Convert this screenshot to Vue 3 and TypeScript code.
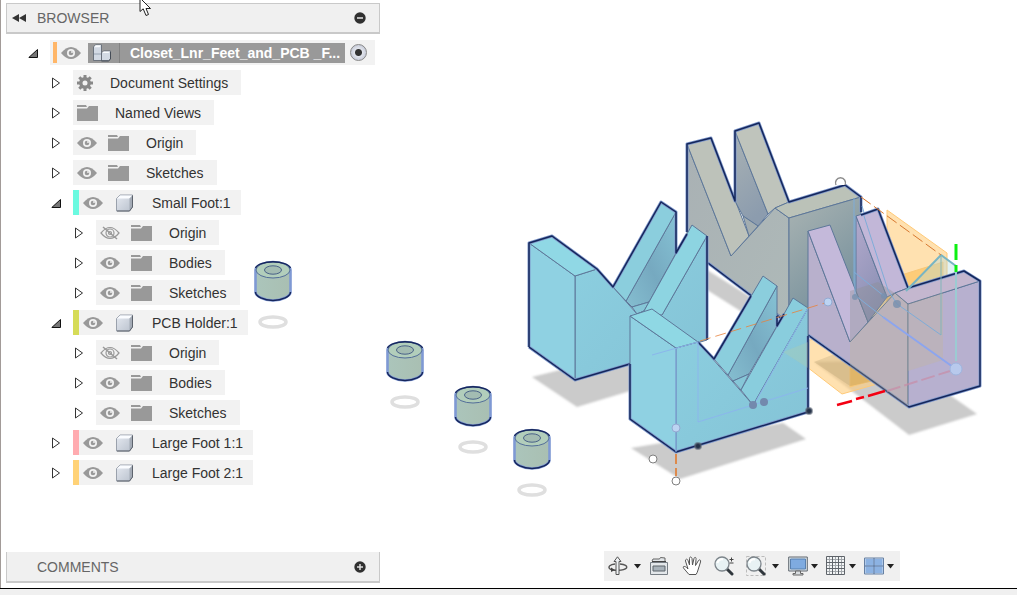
<script setup lang="ts">
import { ref } from 'vue'

type Icon = 'gear' | 'folder' | 'cube'

interface TreeNode {
  id: number
  label: string
  icon: Icon
  visible?: boolean
  tone?: string
  open?: boolean
  children?: TreeNode[]
}

const nodes = ref<TreeNode[]>([
  { id: 1, label: 'Document Settings', icon: 'gear' },
  { id: 2, label: 'Named Views', icon: 'folder' },
  { id: 3, label: 'Origin', icon: 'folder', visible: true },
  { id: 4, label: 'Sketches', icon: 'folder', visible: true },
  {
    id: 5, label: 'Small Foot:1', icon: 'cube', visible: true, tone: 'aqua', open: true,
    children: [
      { id: 51, label: 'Origin', icon: 'folder', visible: false },
      { id: 52, label: 'Bodies', icon: 'folder', visible: true },
      { id: 53, label: 'Sketches', icon: 'folder', visible: true },
    ],
  },
  {
    id: 6, label: 'PCB Holder:1', icon: 'cube', visible: true, tone: 'lime', open: true,
    children: [
      { id: 61, label: 'Origin', icon: 'folder', visible: false },
      { id: 62, label: 'Bodies', icon: 'folder', visible: true },
      { id: 63, label: 'Sketches', icon: 'folder', visible: true },
    ],
  },
  { id: 7, label: 'Large Foot 1:1', icon: 'cube', visible: true, tone: 'rose' },
  { id: 8, label: 'Large Foot 2:1', icon: 'cube', visible: true, tone: 'amber' },
])

interface Row { node: TreeNode; depth: number }

function flatten(list: TreeNode[], depth = 1): Row[] {
  return list.flatMap((node) => [
    { node, depth },
    ...(node.open && node.children ? flatten(node.children, depth + 1) : []),
  ])
}

const feet = [
  { x: 273, y: 270 },
  { x: 405, y: 350 },
  { x: 473, y: 395 },
  { x: 532, y: 438 },
]

const tools = [
  { name: 'Orbit', icon: 'orbit', menu: 'wide' },
  { name: 'Look At', icon: 'look', menu: '' },
  { name: 'Pan', icon: 'pan', menu: '' },
  { name: 'Zoom', icon: 'zoom', menu: '' },
  { name: 'Zoom Window', icon: 'window', menu: 'wide' },
  { name: 'Display Settings', icon: 'display', menu: 'tight' },
  { name: 'Grid and Snaps', icon: 'grid', menu: 'tight' },
  { name: 'Viewports', icon: 'views', menu: 'tight' },
]
</script>

<template>
  <div class="app">
    <main class="workspace">
      <svg class="scene" viewBox="0 0 1017 588" preserveAspectRatio="xMaxYMin meet" role="img" aria-label="Model view">
        <defs>
          <linearGradient id="blueFace" x1="0" y1="0" x2="1" y2="1">
            <stop offset="0" stop-color="#8ccfe0" />
            <stop offset="1" stop-color="#84c3d6" />
          </linearGradient>
          <linearGradient id="blueDark" x1="0" y1="1" x2="1" y2="0">
            <stop offset="0" stop-color="#85bed0" />
            <stop offset="0.45" stop-color="#76a9c0" />
            <stop offset="1" stop-color="#86c3d5" />
          </linearGradient>
          <linearGradient id="grayFace" x1="0" y1="0" x2="1" y2="1">
            <stop offset="0" stop-color="#a9b1b4" />
            <stop offset="1" stop-color="#aeb9b8" />
          </linearGradient>
          <linearGradient id="grayDark" x1="0" y1="0" x2="0.3" y2="1">
            <stop offset="0" stop-color="#a9b2b4" />
            <stop offset="1" stop-color="#8c9cae" />
          </linearGradient>
          <linearGradient id="graySide" x1="0" y1="0" x2="0.5" y2="1">
            <stop offset="0" stop-color="#aab4b3" />
            <stop offset="1" stop-color="#76909c" />
          </linearGradient>
          <linearGradient id="violetDark" x1="0" y1="0" x2="0.4" y2="1">
            <stop offset="0" stop-color="#b3a9cc" />
            <stop offset="1" stop-color="#8a90b4" />
          </linearGradient>
          <linearGradient id="footSide" x1="0" x2="1">
            <stop offset="0" stop-color="#abc5bb" />
            <stop offset="1" stop-color="#a9bfb2" />
          </linearGradient>
          <filter id="soft" x="-10%" y="-10%" width="120%" height="120%">
            <feGaussianBlur stdDeviation="1.2" />
          </filter>
        </defs>

        <!-- ground shadows -->
        <g fill="#cbcbcb" filter="url(#soft)">
          <path d="M532 377L577 407L640 388V350Z" />
          <path d="M631 448L680 479L806 439L783 423Z" />
          <path d="M704 268L752 298L742 312L704 288Z" />
          <path d="M814 362L909 435L977 414L900 360Z" />
        </g>

        <!-- origin planes -->
        <path d="M785 350L842 394L947 364V253L887 210V330L809 340Z" fill="#ffcf80" fill-opacity=".62" stroke="#ffca78" />
        <path d="M850 291L943 262V360L850 387Z" fill="#fbb840" fill-opacity=".5" stroke="#f9c878" />
        <path d="M814 362L850 386L885 379L850 348Z" fill="#8a7a50" opacity=".18" />
        <path d="M941 255L906 291H956V266Z" fill="#a9d6df" fill-opacity=".35" />

        <!-- grey body -->
        <g class="edges">
          <path d="M687 144L731 256L775 208L789 218V322L708 263L687 248Z" fill="url(#grayFace)" />
          <path d="M687 144L711 138L749 236L731 256Z" fill="#bdc2ba" />
          <path d="M735 131V201L743 216L758 226L768 214Z" fill="url(#grayDark)" />
          <path d="M743 216L758 226L749 236Z" fill="#a3adb0" />
          <path d="M735 131L759 123L789 202L775 208L768 214Z" fill="#bfc4bc" />
          <path d="M775 208L789 202L845 185L861 197L789 218Z" fill="#bbc2b8" />
          <path d="M789 218L861 197V320H789Z" fill="url(#graySide)" />
          <path class="outline" d="M687 232V144L711 138L735 201V131L759 123L789 202L845 185L861 197V212M708 263L782 319" />
          <path class="rim" d="M687 232V144L711 138L735 201V131L759 123L789 202L845 185L861 197V212M708 263L782 319" />
        </g>
        <g class="guide" stroke="#7eacd8">
          <path d="M854 198V296M862 206L888 290M854 272L884 296" />
        </g>

        <!-- violet body -->
        <g class="edges">
          <path d="M808 231L850 342L895 293L908 304V407L808 335Z" fill="#b8b0cc" />
          <path d="M908 304L980 281V386L908 407Z" fill="#b7b0cf" />
          <path d="M808 231L830 225L868 322L850 342Z" fill="#c4b9da" />
          <path d="M856 216V291L868 322L887 297Z" fill="url(#violetDark)" />
          <path d="M856 216L878 209L908 288L895 293L887 297Z" fill="#c2b7d8" />
          <path d="M895 293L908 288L964 271L980 281L908 304Z" fill="#c4b7cf" />
          <path class="outline" d="M861 215L878 209L908 288L964 271L980 281V386L909 407L808 335" />
          <path class="rim" d="M861 215L878 209L908 288L964 271L980 281V386L909 407L808 335" />
        </g>
        <path d="M850 342L895 293L908 304L943 293V360L908 371V407L850 366Z" fill="#c4b68c" opacity=".28" />
        <path d="M850 291L878 282L895 293L867 322L850 342Z" fill="#8d8f8e" opacity=".35" />
        <g class="guide" stroke="#7eacd8">
          <path d="M855 216V296M864 216L888 290L897 304L941 335M856 296L883 317M854 272L884 296" />
          <path d="M906 291L941 255L956 266" stroke="#78b5c3" stroke-width="2" />
          <path d="M941 255V335" stroke="#82b5b8" />
          <path d="M956 271V361" stroke="#9ccbd2" stroke-width="2" />
          <path d="M883 317L953 367" stroke="#8ca5ef" stroke-width="2" />
        </g>
        <path d="M956 244V260M956 265V272" stroke="#0df012" stroke-width="3" />
        <path d="M837 405L852 401M856 399L864 397M868 396L885 391" stroke="#f40012" stroke-width="2.500" />
        <path d="M887 391L950 371" stroke="#c98aa5" stroke-width="2" stroke-dasharray="14 4" opacity=".65" />
        <path d="M861 197L941 255" stroke="#d87930" stroke-width="1" stroke-dasharray="12 4" />
        <circle cx="956" cy="369" r="6" fill="#b8c9ec" stroke="#9eb5df" />
        <g fill="#7890ae" opacity=".8">
          <circle cx="855" cy="297" r="3" /><circle cx="884" cy="296" r="3" /><circle cx="897" cy="304" r="4" />
        </g>

        <!-- rear blue body -->
        <g class="edges">
          <path d="M575 276L597 269L637 314L662 315L707 236V340L575 380Z" fill="url(#blueFace)" />
          <path d="M529 243L575 276V380L529 347Z" fill="#8fd1e2" />
          <path d="M529 243L552 236L597 269L575 276Z" fill="#90d8e5" />
          <path d="M676 212V253L649 302L632 307L626 301Z" fill="url(#blueDark)" />
          <path d="M613 287L661 202L676 212L626 301Z" fill="#8bcedd" />
          <path d="M632 307L649 302L644 311L637 314Z" fill="#86c6d7" />
          <path d="M692 225L707 236L662 315L637 314L644 311Z" fill="#8dd4e1" />
          <path class="outline" d="M529 347V243L552 236L597 269L613 287L661 202L676 212V253L687 234M707 236V340M640 361L575 380L529 347" />
          <path class="rim" d="M529 347V243L552 236L597 269L613 287L661 202L676 212V253L687 234M707 236V340M640 361L575 380L529 347" />
        </g>

        <!-- front blue body -->
        <g class="edges">
          <path d="M676 348L698 342L753 405L808 308V412L676 452Z" fill="url(#blueFace)" />
          <path d="M630 316L676 348V452L630 419Z" fill="#8fd1e2" />
          <path d="M630 316L652 309L698 342L676 348Z" fill="#8fd8e4" />
          <path d="M777 286V326L749 374L733 381L728 375Z" fill="url(#blueDark)" />
          <path d="M714 359L763 276L777 286L728 375Z" fill="#8bcedd" />
          <path d="M733 381L749 374L741 390Z" fill="#86c6d7" />
          <path d="M793 298L808 308L753 405L741 390Z" fill="#89cddd" />
          <path class="outline" d="M698 342L714 359L751 296M777 316V326L784 314M808 336V412L676 452L630 419V364" />
          <path class="rim" d="M698 342L714 359L751 296M777 316V326L784 314M808 336V412L676 452L630 419V364" />
        </g>
        <path d="M808 342L783 352L808 368Z" fill="#bfcf9c" opacity=".25" />
        <g class="guide" stroke="#8bb6ec">
          <path d="M676 348V452M652 355L698 342V422L808 388M756 401L808 308" />
        </g>
        <path d="M700 341L828 302" stroke="#e8823c" stroke-width="1" stroke-dasharray="11 5" opacity=".8" />
        <path d="M676 454V476" stroke="#dd8a4c" stroke-width="2" stroke-dasharray="10 4" />

        <g fill="#7389ad">
          <circle cx="753" cy="405" r="4" /><circle cx="764" cy="402" r="4" />
        </g>
        <g fill="#233047" stroke="#5b6575" stroke-opacity=".6" stroke-width="2">
          <circle cx="698" cy="446" r="3" /><circle cx="809" cy="411" r="3" />
        </g>
        <g fill="#bcd4f2" stroke="#94aad2">
          <circle cx="676" cy="428" r="4" /><circle cx="828" cy="302" r="4" />
        </g>
        <g fill="#fff" stroke="#7f7f7f">
          <circle cx="653" cy="459" r="4" /><circle cx="676" cy="481" r="4" />
        </g>
        <path d="M836 185A5 5 0 1 1 845 185" fill="#fff" stroke="#8c8c8c" stroke-width="1.5" />

        <!-- small feet -->
        <g v-for="foot in feet" :key="foot.x" :transform="`translate(${foot.x} ${foot.y})`">
          <ellipse cy="52" rx="13" ry="5" fill="none" stroke="#dfdfdf" stroke-width="3.500" />
          <path d="M-17.5 0V22C-17.5 26 -9 30.5 0 30.5S17.5 26 17.5 22V0C17.5 -4 9 -8 0 -8S-17.5 -4 -17.5 0Z" fill="url(#footSide)" stroke="#7f99d4" stroke-width="2.6" />
          <ellipse rx="17" ry="8" fill="#b2cebb" stroke="#536e99" stroke-width="1" />
          <ellipse rx="8.5" ry="4.2" fill="#a3bcb2" stroke="#4a6288" />
          <path d="M-17.5 -2C-16 -5.500 -9 -8.200 0 -8.200S16 -5.500 17.500 -2M-17.500 22C-17.500 26.500 -9 30.500 0 30.500S17.500 26.500 17.500 22" fill="none" stroke="#16265c" stroke-width="1.5" />
        </g>
      </svg>

      <header class="panel">
        <button class="icon-button collapse" aria-label="Collapse browser">
          <svg width="14" height="8" viewBox="0 0 14 8"><path d="M7 0V8L0 4ZM14 0V8L7 4Z" fill="#333" /></svg>
        </button>
        <h2>BROWSER</h2>
        <button class="icon-button" aria-label="Minimize browser">
          <svg width="12" height="12" viewBox="0 0 12 12"><circle cx="6" cy="6" r="5.700" fill="#303030" /><path d="M3 6H9" stroke="#ddd" stroke-width="1.600" /></svg>
        </button>
      </header>

      <nav class="tree" aria-label="Browser">
        <div class="row root">
          <button class="toggle" aria-label="Collapse document">
            <svg width="10" height="10" viewBox="0 0 10 10"><path d="M9.500 1.500V9.500H.8Z" fill="#777" stroke="#111" /></svg>
          </button>
          <div class="item root-item">
            <span class="strip orange"></span>
            <button class="icon-button" aria-label="Hide document">
              <svg width="20" height="14" viewBox="0 0 20 14"><path d="M0 7Q10-5 20 7Q10 19 0 7Z" fill="#999" /><circle cx="10" cy="7" r="4" fill="#f2f2f2" /><circle cx="10" cy="7" r="2.300" fill="#999" /><circle cx="11" cy="6" r="1" fill="#eee" /></svg>
            </button>
            <div class="title">
              <span class="title-icon">
                <svg width="20" height="18" viewBox="0 0 20 18">
                  <path d="M1.500 3L3.500 .8H9.500V16.500H1.500Z" fill="#d3dae4" stroke="#59616c" stroke-width=".8" />
                  <path d="M2 3.200L3.700 1.300H9L7.500 3.200Z" fill="#fafcfe" />
                  <path d="M9.500 9L11.500 7H18.500V15L16.500 17H9.500Z" fill="#d3dae4" stroke="#59616c" stroke-width=".8" />
                  <path d="M10 9L11.700 7.400H18L16.500 9Z" fill="#fafcfe" />
                  <path d="M2 10H9" stroke="#8c97a6" stroke-width=".8" />
                  <path d="M9.500 16.800H16.700L18.500 15V8" stroke="#454c56" fill="none" />
                </svg>
              </span>
              <span class="title-text">Closet_Lnr_Feet_and_PCB _F...</span>
            </div>
            <input class="activate" type="radio" name="active" checked aria-label="Activate document" />
          </div>
        </div>

        <ul>
          <li v-for="{ node, depth } in flatten(nodes)" :key="node.id" class="row" :class="{ nested: depth === 2 }">
            <button class="toggle" :aria-label="(node.open ? 'Collapse ' : 'Expand ') + node.label" @click="node.open = !node.open">
              <svg v-if="node.open" width="10" height="10" viewBox="0 0 10 10"><path d="M9.500 1.500V9.500H.8Z" fill="#777" stroke="#111" /></svg>
              <svg v-else width="10" height="12" viewBox="0 0 10 12"><path d="M1.500 1V11L8.500 6Z" fill="#fff" stroke="#333" /></svg>
            </button>
            <div class="item" :class="node.icon">
              <span v-if="node.tone" class="strip" :class="node.tone"></span>
              <button
                v-if="node.visible !== undefined"
                class="icon-button eye"
                :aria-label="(node.visible ? 'Hide ' : 'Show ') + node.label"
                @click="node.visible = !node.visible"
              >
                <svg v-if="node.visible" width="20" height="14" viewBox="0 0 20 14"><path d="M0 7Q10-5 20 7Q10 19 0 7Z" fill="#999" /><circle cx="10" cy="7" r="4" fill="#f2f2f2" /><circle cx="10" cy="7" r="2.300" fill="#999" /><circle cx="11" cy="6" r="1" fill="#eee" /></svg>
                <svg v-else width="20" height="14" viewBox="0 0 20 14" fill="none" stroke="#999" stroke-width="1.200"><path d="M1 7Q10-4 19 7Q10 18 1 7Z" /><circle cx="10" cy="7" r="4" /><circle cx="10" cy="7" r="1.500" /><path d="M3 1L17 13" stroke-width="1.500" /></svg>
              </button>
              <svg v-if="node.icon === 'gear'" width="16" height="16" viewBox="-8 -8 16 16" fill="none" stroke="#888">
                <circle r="4.200" stroke-width="3.400" />
                <path d="M0-8V-5M0 5V8M-8 0H-5M5 0H8M-5.700-5.700L-3.600-3.600M3.600 3.600L5.700 5.700M-5.700 5.700L-3.600 3.600M3.600-3.600L5.700-5.700" stroke-width="3" />
              </svg>
              <svg v-else-if="node.icon === 'folder'" width="21" height="16" viewBox="0 0 21 16" fill="#999"><path d="M0 0H9L10 2H0Z" /><path d="M0 3.500H10L12 1H21V16H0Z" /></svg>
              <svg v-else width="21" height="18" viewBox="0 0 21 18">
                <defs><linearGradient :id="'cube' + node.id" x2="1" y2="1"><stop stop-color="#e6eaf1" /><stop offset="1" stop-color="#b9c1cd" /></linearGradient></defs>
                <path d="M2.500 4.500L6 1H18.500V13L15.500 17H2.500Z" :fill="`url(#cube${node.id})`" stroke="#9aa1ac" />
                <path d="M3 4.500L6 1.500H18L15.500 4.500Z" fill="#fafcff" />
                <path d="M15.500 4.500L18.500 1.500V13L15.500 17Z" fill="#a4abb6" />
                <path d="M3 17H15.500L18.500 13V1.500" fill="none" stroke="#5d636d" />
              </svg>
              <span class="label">{{ node.label }}</span>
            </div>
          </li>
        </ul>
      </nav>

      <footer class="dock">
        <section class="panel comments">
          <h2>COMMENTS</h2>
          <button class="icon-button" aria-label="Expand comments">
            <svg width="12" height="12" viewBox="0 0 12 12"><circle cx="6" cy="6" r="5.700" fill="#303030" /><path d="M3 6H9M6 3V9" stroke="#ddd" stroke-width="1.500" /></svg>
          </button>
        </section>

        <div class="toolbar" role="toolbar" aria-label="Navigation">
          <div v-for="tool in tools" :key="tool.icon" class="tool" :class="tool.menu">
            <button class="icon-button" :aria-label="tool.name">
              <svg width="20" height="20" viewBox="0 0 20 20" fill="none">
                <g v-if="tool.icon === 'orbit'">
                  <path d="M7 8C2 8.500 0 10.500 1.500 12.500C4 15 16 15 18.500 12C19.500 10 17 8.500 12 8" stroke="#555" stroke-width="1.400" />
                  <path d="M9.500 .8L13 5.500H11V18.500H8V5.500H6Z" fill="#eef1f3" stroke="#555" />
                  <path d="M3 11.500L7 14L3 16Z" fill="#444" />
                </g>
                <g v-else-if="tool.icon === 'look'">
                  <path d="M.5 6.500H17.500V18.500H.5Z" fill="#e3e7ea" stroke="#777e85" />
                  <path d="M3 10H15V15H3Z" fill="#a8b2ba" stroke="#5d646b" />
                  <path d="M2 5L3 3H9.500L10.500 1.500L15 2V5" fill="#e1e5e8" stroke="#666" /><path d="M2 5.500H16" stroke="#444" />
                </g>
                <g v-else-if="tool.icon === 'pan'">
                  <path d="M7 18.500C5 16 3 14 1.500 12C.5 10 3 10 4.500 11.500L6 13L3.500 5C3 3 5.500 2.500 6 4.500L7.500 9V2.500C7.500 .5 9.500 .5 10 2.500L10.500 9L12 2.500C12.500 .8 14.500 1 14 3.500L13.500 9.500L16.500 4.500C17.500 3.200 19.200 4 18.500 6L16 14C15.500 16 15 17 14 18.500Z" fill="#fff" stroke="#555" />
                </g>
                <g v-else-if="tool.icon === 'zoom'">
                  <path d="M13 13L18 18" stroke="#30373d" stroke-width="3" stroke-linecap="round" />
                  <circle cx="8" cy="8" r="7" fill="#e8f2f4" stroke="#7d858b" stroke-width="1.300" />
                  <path d="M3.500 7C4 4 6.500 3 9 3.500" stroke="#fff" stroke-width="2" />
                  <path d="M15.500 3.500H19.500M17.500 1.500V5.500M15.500 7H19.500" stroke="#444" />
                </g>
                <g v-else-if="tool.icon === 'window'">
                  <path d="M.5 .5H19.500V19.500H.5Z" stroke="#bbb" stroke-dasharray="3 2" />
                  <path d="M13 13L18 18" stroke="#30373d" stroke-width="3" stroke-linecap="round" />
                  <circle cx="8" cy="8" r="7" fill="#e8f2f4" stroke="#7d858b" stroke-width="1.300" />
                  <path d="M3.500 7C4 4 6.500 3 9 3.500" stroke="#fff" stroke-width="2" />
                </g>
                <g v-else-if="tool.icon === 'display'">
                  <path d="M.7 1H19.300V15H.7Z" fill="#dce4e9" stroke="#626970" />
                  <path d="M2.500 3H17.500V13H2.500Z" fill="#7fabe0" stroke="#5980af" />
                  <path d="M7.500 15H12.500V17.500H15V19H5V17.500H7.500Z" fill="#d9dde0" stroke="#666" />
                </g>
                <g v-else-if="tool.icon === 'grid'">
                  <path d="M.5 .5H18.500V18.500H.5Z" fill="#f3f5f6" />
                  <path d="M3.500 1V18M9.500 1V18M15.500 1V18M1 3.500H18M1 9.500H18M1 15.500H18" stroke="#a3a8ac" />
                  <path d="M.5 .5H18.500V18.500H.5ZM6.500 1V18M12.500 1V18M1 6.500H18M1 12.500H18" stroke="#5f646a" />
                </g>
                <g v-else>
                  <path d="M.5 2H19.500V18H.5Z" fill="#d3e1f2" stroke="#6680a3" />
                  <path d="M1.500 3H9.500V9.500H1.500ZM10.500 3H18.500V9.500H10.500ZM1.500 10.500H9.500V17H1.500ZM10.500 10.500H18.500V17H10.500Z" fill="#8cb2e2" />
                  <path d="M10 2V18M1 10H19" stroke="#4f6f9b" />
                </g>
              </svg>
            </button>
            <button v-if="tool.menu" class="icon-button caret" :aria-label="tool.name + ' options'">
              <svg width="9" height="6" viewBox="0 0 9 6"><path d="M1 1H8L4.500 5.500Z" fill="#222" /></svg>
            </button>
          </div>
        </div>
      </footer>

      <svg class="pointer" width="14" height="18" viewBox="0 0 14 18"><path d="M1-2V11.500L4.200 8.800L7 15.500L9.500 14.500L7 8.500H11.500Z" fill="#fff" stroke="#222" /></svg>
    </main>
    <div class="status"></div>
  </div>
</template>

<style>
body {
  margin: 0;
}
</style>

<style scoped>
.app {
  min-height: 100vh;
  display: flex;
  flex-direction: column;
  background: #fff;
  color: #333;
  font: 14px/20px "Liberation Sans", Arial, sans-serif;
}
.workspace {
  position: relative;
  flex: 1;
  display: flex;
  flex-direction: column;
  border-left: 1px solid #a29b98;
  padding-top: 3px;
}
.scene {
  position: absolute;
  top: 0;
  left: -1px;
  width: calc(100% + 1px);
  height: 100%;
}
.edges path {
  stroke: #5d7799;
  stroke-width: 1;
  stroke-linejoin: round;
}
.edges .outline {
  fill: none;
  stroke: #7f98cb;
  stroke-width: 3;
}
.edges .rim {
  fill: none;
  stroke: #14265b;
  stroke-width: 1.5;
}
.guide path {
  fill: none;
}
.panel {
  position: relative;
  box-sizing: border-box;
  width: 374px;
  max-width: 100%;
  height: 31px;
  margin-left: 5px;
  display: flex;
  align-items: center;
  padding: 0 13px 0 5px;
  background: #f0f0f0;
  border: 1px solid #c9c9c9;
  border-bottom-width: 2px;
}
.comments {
  border-top: 0;
  padding-left: 30px;
}
h2 {
  margin: 0;
  flex: 1;
  font-size: 14px;
  font-weight: 400;
  color: #666;
}
.icon-button,
.toggle {
  display: flex;
  align-items: center;
  justify-content: center;
  padding: 0;
  border: 0;
  background: none;
  flex: none;
}
.collapse {
  margin-right: 11px;
}
svg {
  display: block;
  flex: none;
}
.tree {
  position: relative;
  flex: 1;
  width: 374px;
  max-width: 100%;
  padding-top: 6px;
}
ul {
  margin: 5px 0 0;
  padding: 0;
  list-style: none;
  display: flex;
  flex-direction: column;
  gap: 5px;
}
.row {
  display: flex;
  height: 25px;
  padding-left: 50px;
}
.nested {
  padding-left: 73px;
}
.root {
  padding-left: 27px;
}
.toggle {
  width: 22px;
  justify-content: flex-start;
}
.item {
  display: flex;
  align-items: center;
  background: #f2f2f2;
  padding: 0 13px 0 4px;
}
.item.cube {
  padding: 0 10px 0 0;
}
.strip {
  align-self: stretch;
  width: 6px;
  margin-right: 4px;
}
.aqua { background: #6bfae0; }
.lime { background: #d6dc58; }
.rose { background: #ffabb0; }
.amber { background: #ffd277; }
.orange {
  width: 4px;
  margin: 2px 4px 2px 0;
  background: #ffb668;
}
.eye {
  margin-right: 11px;
}
.label {
  margin-left: 17px;
  white-space: nowrap;
}
.item.root-item {
  flex: 1;
  min-width: 0;
  padding: 0 8px 0 3px;
}
.title {
  flex: 1;
  min-width: 0;
  display: flex;
  align-items: center;
  height: 20px;
  margin: 0 5px 0 7px;
  background: #999;
  color: #fff;
  font-weight: 700;
}
.title-icon {
  padding: 1px 7px 1px 4px;
  margin-right: 10px;
  border-right: 1px solid #828282;
}
.title-text {
  white-space: nowrap;
}
.activate {
  appearance: none;
  flex: none;
  width: 17px;
  height: 17px;
  margin: 0;
  border: 1px solid #888;
  border-radius: 50%;
  background: radial-gradient(circle, #333 0 3px, #e1e4ec 4px, #c6cad8 8px);
}
.dock {
  position: relative;
  display: flex;
  align-items: flex-end;
  justify-content: space-between;
  padding-bottom: 5px;
}
.toolbar {
  display: flex;
  align-items: center;
  height: 30px;
  box-sizing: border-box;
  margin: 0 117px 2px 0;
  padding: 0 5px 0 4px;
  background: #f0f0f0;
}
.tool {
  display: flex;
  align-items: center;
  margin-right: 12px;
}
.tool.wide {
  gap: 5px;
  margin-right: 8px;
}
.tool.tight {
  gap: 2px;
  margin-right: 7px;
}
.tool:last-child {
  margin-right: 0;
}
.pointer {
  position: absolute;
  top: 0;
  left: 138px;
  pointer-events: none;
}
.status {
  height: 6px;
  border-top: 1px solid #000;
  background: #f0f0f0;
}
</style>
